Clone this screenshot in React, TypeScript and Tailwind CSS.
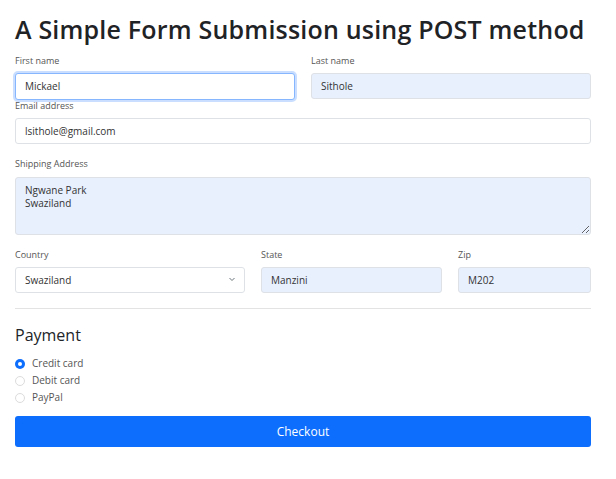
import { useState } from 'react';

const font = { fontFamily: '"Open Sans", "Noto Sans", sans-serif' };

export default function App() {
  const [payment, setPayment] = useState('credit');

  return (
    <main className="w-[591px] bg-white pl-[15px] pt-[14px] text-[#212529]" style={font}>
      <h1 className="text-[25px] leading-[30px] font-semibold tracking-[0.2px] text-[#1f2326]">
        A Simple Form Submission using POST method
      </h1>

      <form className="mt-[10px]" onSubmit={(e) => e.preventDefault()}>
        <div className="grid grid-cols-2 gap-x-[16px]">
          <Field label="First name">
            <input
              defaultValue="Mickael"
              className="h-[27px] w-full rounded-[3px] border border-[#86b7fe] bg-white px-[9px] text-[10px] text-[#333] outline-none shadow-[0_0_0_2px_rgba(13,110,253,0.22)]"
            />
          </Field>
          <Field label="Last name">
            <input defaultValue="Sithole" className={inputCls(true)} />
          </Field>
        </div>

        <Field label="Email address" className="mt-[-1px]">
          <input defaultValue="lsithole@gmail.com" className={inputCls(false)} />
        </Field>

        <Field label="Shipping Address" className="mt-[13px]">
          <textarea
            defaultValue={'Ngwane Park\nSwaziland'}
            className="mt-[7px] block h-[58px] w-full resize-y rounded-[3px] border border-[#dee2e6] bg-[#e8f0fe] px-[9px] py-[6px] text-[10px] leading-[13px] text-[#333] outline-none"
          />
        </Field>

        <div className="mt-[13px] grid grid-cols-[230px_181px_133px] gap-x-[16px]">
          <Field label="Country">
            <div className="relative">
              <select
                defaultValue="Swaziland"
                className="h-[26px] w-full appearance-none rounded-[3px] border border-[#dee2e6] bg-white px-[9px] text-[10px] text-[#333] outline-none"
              >
                <option>Swaziland</option>
                <option>South Africa</option>
              </select>
              <svg
                viewBox="0 0 16 16"
                className="pointer-events-none absolute right-[9px] top-[9px] h-[8px] w-[8px]"
                fill="none"
                stroke="#6c757d"
                strokeWidth="2"
              >
                <path d="M3 6l5 5 5-5" />
              </svg>
            </div>
          </Field>
          <Field label="State">
            <input defaultValue="Manzini" className={inputCls(true)} />
          </Field>
          <Field label="Zip">
            <input defaultValue="M202" className={inputCls(true)} />
          </Field>
        </div>

        <hr className="mt-[15px] border-t border-[#e3e3e3]" />

        <h4 className="mt-[16px] text-[16px] leading-[20px] font-medium">Payment</h4>

        <div className="mt-[10px] flex flex-col">
          {[
            ['credit', 'Credit card'],
            ['debit', 'Debit card'],
            ['paypal', 'PayPal'],
          ].map(([id, label]) => (
            <label key={id} className="flex h-[17px] items-center gap-[7px] text-[10px] text-[#555]">
              <span
                onClick={() => setPayment(id)}
                className={
                  payment === id
                    ? 'flex h-[10px] w-[10px] items-center justify-center rounded-full bg-[#0d6efd]'
                    : 'h-[10px] w-[10px] rounded-full border border-[#dcdcdc] bg-white'
                }
              >
                {payment === id && <span className="h-[4px] w-[4px] rounded-full bg-white" />}
              </span>
              {label}
            </label>
          ))}
        </div>

        <button
          type="submit"
          className="mt-[10px] h-[31px] w-full rounded-[3px] bg-[#0d6efd] text-[12px] text-white"
        >
          Checkout
        </button>
      </form>
    </main>
  );
}

function inputCls(filled: boolean) {
  return filled
    ? 'h-[26px] w-full rounded-[3px] border border-[#dee2e6] bg-[#e8f0fe] px-[9px] text-[10px] text-[#333] outline-none'
    : 'h-[26px] w-full rounded-[3px] border border-[#dee2e6] bg-white px-[9px] text-[10px] text-[#333] outline-none';
}

function Field({
  label,
  className = '',
  children,
}: {
  label: string;
  className?: string;
  children: React.ReactNode;
}) {
  return (
    <div className={className}>
      <label className="mb-[5px] block text-[9px] leading-[13px] text-[#555]">{label}</label>
      {children}
    </div>
  );
}
